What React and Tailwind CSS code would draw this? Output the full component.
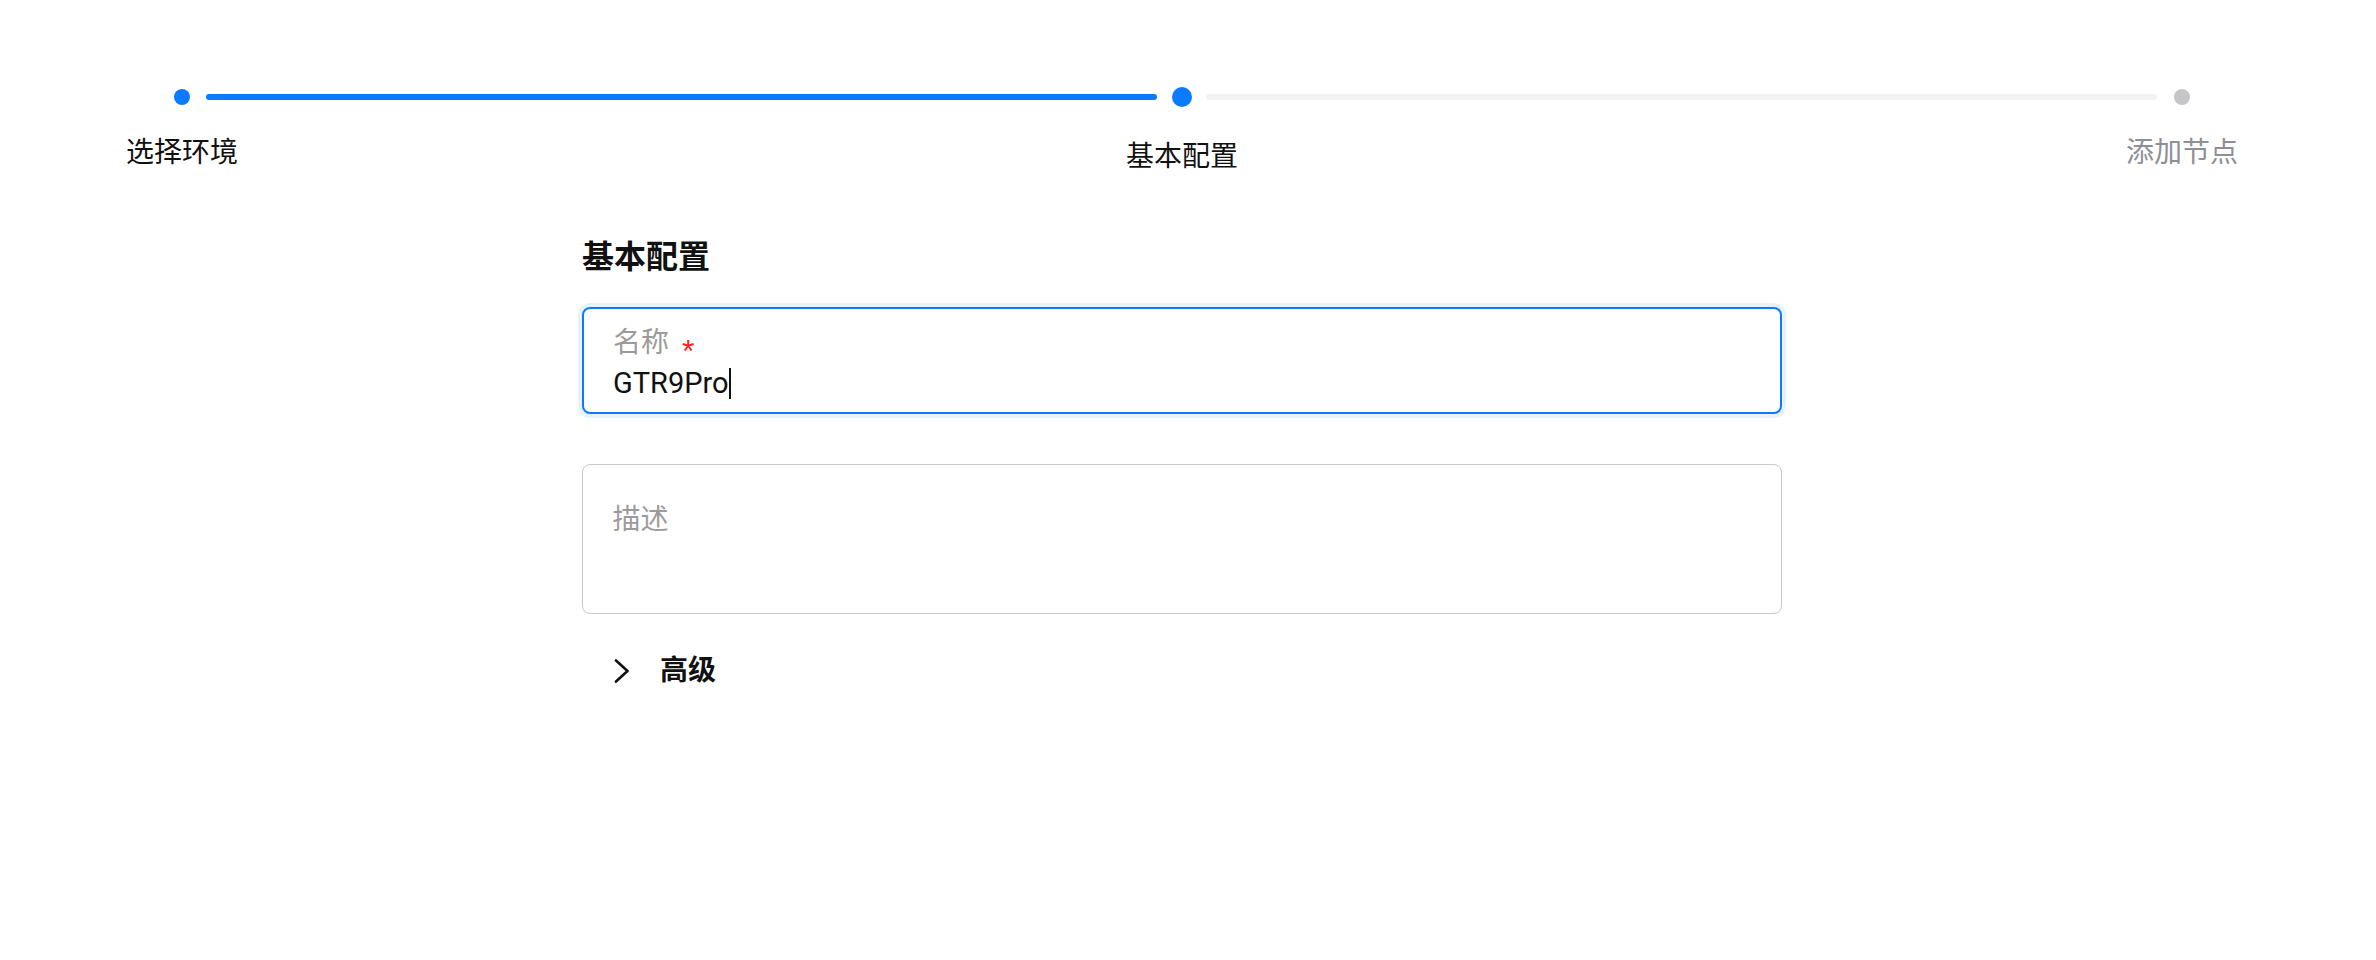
export default function App() {
  return (
    <div className="w-[2376px] h-[960px] bg-white overflow-hidden font-['Liberation_Sans','Noto_Sans_CJK_SC',sans-serif] text-[#111]">
      {/* Stepper */}
      <div className="pt-[87px]">
        <div className="flex items-center h-[20px] pl-[174px]">
          <div className="w-[16px] h-[16px] rounded-full bg-[#0a7aff] shrink-0" />
          <div className="ml-[16px] w-[951px] h-[6px] rounded-full bg-[#0a7aff] shrink-0" />
          <div className="ml-[15px] w-[20px] h-[20px] rounded-full bg-[#0a7aff] shrink-0" />
          <div className="ml-[14px] w-[951px] h-[6px] rounded-full bg-[#f2f2f2] shrink-0" />
          <div className="ml-[17px] w-[16px] h-[16px] rounded-full bg-[#c6c6c8] shrink-0" />
        </div>
        <div className="flex items-start pl-[82px] mt-[32px] h-[32px]">
          <div className="w-[200px] text-center text-[28px] leading-[28px] text-[#111]">选择环境</div>
          <div className="ml-[800px] w-[200px] mt-[4px] text-center text-[28px] leading-[28px] text-[#111]">基本配置</div>
          <div className="ml-[800px] w-[200px] text-center text-[28px] leading-[28px] text-[#8e8e93]">添加节点</div>
        </div>
      </div>

      {/* Form */}
      <div className="ml-[582px] w-[1200px] mt-[70px]">
        <div className="text-[32px] leading-[32px] font-bold text-[#111]">基本配置</div>

        <div className="mt-[34px] h-[107px] rounded-[8px] border-2 border-[#0a7aff] shadow-[0_0_0_4px_#e8f2fe] pl-[29px] pt-[20px] flex flex-col">
          <div className="flex items-start text-[28px] leading-[28px]">
            <span className="text-[#9b9b9b]">名称</span>
            <span className="ml-[13px] text-[#ff2020] translate-y-[8px] text-[32px] leading-[28px]">*</span>
          </div>
          <div className="mt-[9px] flex items-center h-[34px]">
            <span className="font-['Roboto',sans-serif] text-[29px] leading-[34px] text-[#111]">GTR9Pro</span>
            <span className="w-[2px] h-[31px] bg-[#111]" />
          </div>
        </div>

        <div className="mt-[50px] h-[150px] rounded-[8px] border-[1.5px] border-[#c8c8ce] pl-[29.5px] pt-[41px]">
          <div className="text-[28px] leading-[28px] text-[#9b9b9b]">描述</div>
        </div>

        <div className="mt-[43px] flex items-center h-[28px] pl-[32px]">
          <svg width="16" height="24" viewBox="0 0 16 24" fill="none" className="shrink-0">
            <polyline points="2,1.5 13.5,12 2,22.5" stroke="#111" strokeWidth="2.6" strokeLinecap="round" strokeLinejoin="round" fill="none" />
          </svg>
          <span className="ml-[30px] text-[28px] leading-[28px] font-bold text-[#111]">高级</span>
        </div>
      </div>
    </div>
  );
}
